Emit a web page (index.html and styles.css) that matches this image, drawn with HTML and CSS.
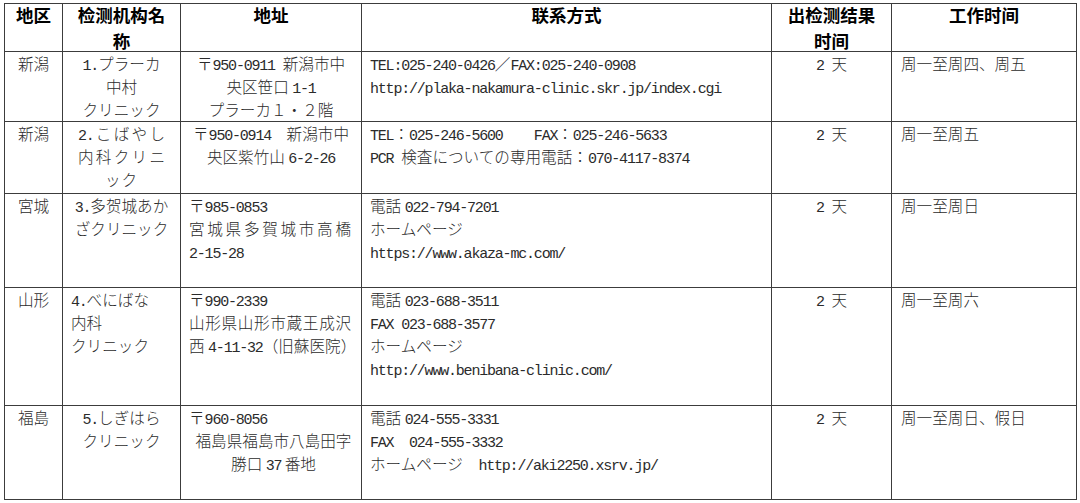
FILE: index.html
```html
<!DOCTYPE html>
<html lang="ja">
<head>
<meta charset="utf-8">
<link rel="stylesheet" href="styles.css">
</head>
<body>
<table class="grid">
  <colgroup>
    <col class="w-area"><col class="w-name"><col class="w-addr"><col class="w-contact"><col class="w-result"><col class="w-hours">
  </colgroup>
  <thead>
    <tr class="head">
      <th><div class="hbox">地区</div></th>
      <th><div class="hbox">检测机构名<br>称</div></th>
      <th><div class="hbox">地址</div></th>
      <th><div class="hbox">联系方式</div></th>
      <th><div class="hbox">出检测结果<br>时间</div></th>
      <th><div class="hbox">工作时间</div></th>
    </tr>
  </thead>
  <tbody>
    <tr class="r1">
      <td class="center">新潟</td>
      <td class="center"><span class="m">1.</span>プラーカ<br>中村<br>クリニック</td>
      <td class="center">〒<span class="m">950-0911 </span>新潟市中<br>央区笹口 <span class="m">1-1</span><br>プラーカ１・２階</td>
      <td class="left"><span class="m">TEL:025-240-0426</span>／<span class="m">FAX:025-240-0908</span><br><span class="m">http://plaka-nakamura-clinic.skr.jp/index.cgi</span></td>
      <td class="center"><span class="m">2 </span><span class="cn">天</span></td>
      <td class="left zh">周一至周四、周五</td>
    </tr>
    <tr class="r2">
      <td class="center">新潟</td>
      <td class="center">
        <div class="dist"><span class="m">2.</span>こばやし</div>
        <div class="dist">内科クリニ</div>
        <div class="spread">ック</div>
      </td>
      <td class="center">〒<span class="m">950-0914</span>　新潟市中<br>央区紫竹山 <span class="m">6-2-26</span></td>
      <td class="left"><span class="m">TEL</span>：<span class="m">025-246-5600</span>　　<span class="m">FAX</span>：<span class="m">025-246-5633</span><br><span class="m">PCR </span>検査についての専用電話：<span class="m">070-4117-8374</span></td>
      <td class="center"><span class="m">2 </span><span class="cn">天</span></td>
      <td class="left zh">周一至周五</td>
    </tr>
    <tr class="r3">
      <td class="center">宮城</td>
      <td class="center"><span class="m">3.</span><span class="cn">多贺城</span>あか<br>ざクリニック</td>
      <td class="left">
        <div>〒<span class="m">985-0853</span></div>
        <div class="fill">宮城県多賀城市高橋</div>
        <div><span class="m">2-15-28</span></div>
      </td>
      <td class="left">電話 <span class="m">022-794-7201</span><br>ホームページ<br><span class="m">https://www.akaza-mc.com/</span></td>
      <td class="center"><span class="m">2 </span><span class="cn">天</span></td>
      <td class="left zh">周一至周日</td>
    </tr>
    <tr class="r4">
      <td class="center">山形</td>
      <td class="left"><span class="m">4.</span>べにばな<br>内科<br>クリニック</td>
      <td class="left">
        <div>〒<span class="m">990-2339</span></div>
        <div class="fill">山形県山形市蔵王成沢</div>
        <div>西 <span class="m">4-11-32</span>（旧蘇医院）</div>
      </td>
      <td class="left">電話 <span class="m">023-688-3511</span><br><span class="m">FAX 023-688-3577</span><br>ホームページ<br><span class="m">http://www.benibana-clinic.com/</span></td>
      <td class="center"><span class="m">2 </span><span class="cn">天</span></td>
      <td class="left zh">周一至周六</td>
    </tr>
    <tr class="r5">
      <td class="center">福島</td>
      <td class="center"><span class="m">5.</span>しぎはら<br>クリニック</td>
      <td class="left">
        <div>〒<span class="m">960-8056</span></div>
        <div class="middle">福島県福島市八島田字<br>勝口 <span class="m">37</span> 番地</div>
      </td>
      <td class="left">電話 <span class="m">024-555-3331</span><br><span class="m">FAX</span>　<span class="m">024-555-3332</span><br>ホームページ　<span class="m">http://aki2250.xsrv.jp/</span></td>
      <td class="center"><span class="m">2 </span><span class="cn">天</span></td>
      <td class="left zh">周一至周日、假日</td>
    </tr>
  </tbody>
</table>
</body>
</html>
```

FILE: styles.css
```css
html, body {
  background: #ffffff;
}
body {
  margin: 0;
  padding: 3px 0 0 4px;
  font-family: "Noto Sans CJK JP", "Noto Sans CJK SC", sans-serif;
  font-size: 15.6px;
  line-height: 23px;
  color: #2b2b2b;
  font-weight: 300;
}
.grid {
  border-collapse: collapse;
  table-layout: fixed;
  width: 1073px;
}
.w-area { width: 58px; }
.w-name { width: 118px; }
.w-addr { width: 181px; }
.w-contact { width: 410px; }
.w-result { width: 120px; }
.w-hours { width: 185px; }

.grid th,
.grid td {
  border: 1px solid #3c3c3c;
  vertical-align: top;
  padding: 0;
  white-space: nowrap;
}
.grid th {
  font-family: "Noto Sans CJK SC", sans-serif;
  font-weight: 700;
  font-size: 17.5px;
  line-height: 26px;
  color: #000;
  text-align: center;
  padding: 0;
}
.hbox {
  height: 46px;
  overflow: visible;
  margin-top: -2px;
}
.head { height: 48px; }
.r1 { height: 70px; }
.r2 { height: 72px; }
.r3 { height: 94px; }
.r4 { height: 118px; }
.r5 { height: 94px; }

.center { text-align: center; }
.left { text-align: left; padding-left: 8px !important; }
.zh { font-family: "Noto Sans CJK SC", sans-serif; padding-left: 9px !important; }
.cn { font-family: "Noto Sans CJK SC", sans-serif; line-height: 1; }

.m {
  font-family: "Liberation Mono", monospace;
  font-size: 15px;
  letter-spacing: -1.2px;
  line-height: 1;
}

.dist {
  width: 87px;
  margin: 0 auto;
  text-align: justify;
  text-align-last: justify;
}
.spread {
  letter-spacing: 1px;
  text-align: center;
}
.fill {
  width: 162px;
  text-align: justify;
  text-align-last: justify;
}
.middle {
  text-align: center;
  margin-left: -3px;
}
```
